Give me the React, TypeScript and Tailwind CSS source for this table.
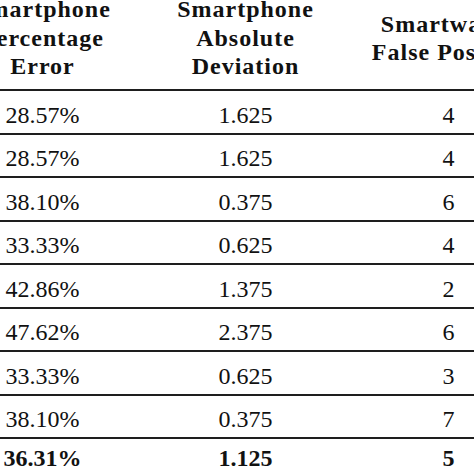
const rows: [string, string, string][] = [
  ["28.57%", "1.625", "4"],
  ["28.57%", "1.625", "4"],
  ["38.10%", "0.375", "6"],
  ["33.33%", "0.625", "4"],
  ["42.86%", "1.375", "2"],
  ["47.62%", "2.375", "6"],
  ["33.33%", "0.625", "3"],
  ["38.10%", "0.375", "7"],
]

const headers = [
  ["Smartphone", "Percentage", "Error"],
  ["Smartphone", "Absolute", "Deviation"],
  ["Smartwatch", "False Positive"],
]

export default function App() {
  return (
    <div
      className="w-[474px] h-[474px] overflow-hidden bg-white text-[#111]"
      style={{ fontFamily: '"Liberation Serif", "Times New Roman", serif' }}
    >
      <div className="-ml-[59px] w-[609px]">
        {/* header */}
        <div className="grid grid-cols-3 grid-rows-[89px] h-[91px] border-b-2 border-[#1e1e1e]">
          {headers.map((lines, i) => (
            <div
              key={i}
              className={
                "flex flex-col items-center justify-end h-[89px] min-h-0 text-[24px] leading-[28.7px] font-bold tracking-[1px] " +
                (lines.length === 3 ? "pb-[8px]" : "pb-[22px]")
              }
            >
              {lines.map((l) => (
                <span key={l} className="whitespace-nowrap shrink-0">
                  {l}
                </span>
              ))}
            </div>
          ))}
        </div>

        {rows.map((r, i) => (
          <div
            key={i}
            className="grid grid-cols-3 h-[43.5px] border-b-2 border-[#1e1e1e] text-[24px] leading-none"
          >
            {r.map((c, j) => (
              <div key={j} className="flex items-center justify-center pt-[6px]">
                {c}
              </div>
            ))}
          </div>
        ))}

        {/* mean row */}
        <div className="grid grid-cols-3 h-[38px] text-[24px] leading-none font-bold">
          <div className="flex items-center justify-center">36.31%</div>
          <div className="flex items-center justify-center">1.125</div>
          <div className="flex items-center justify-center">5</div>
        </div>
      </div>
    </div>
  )
}
